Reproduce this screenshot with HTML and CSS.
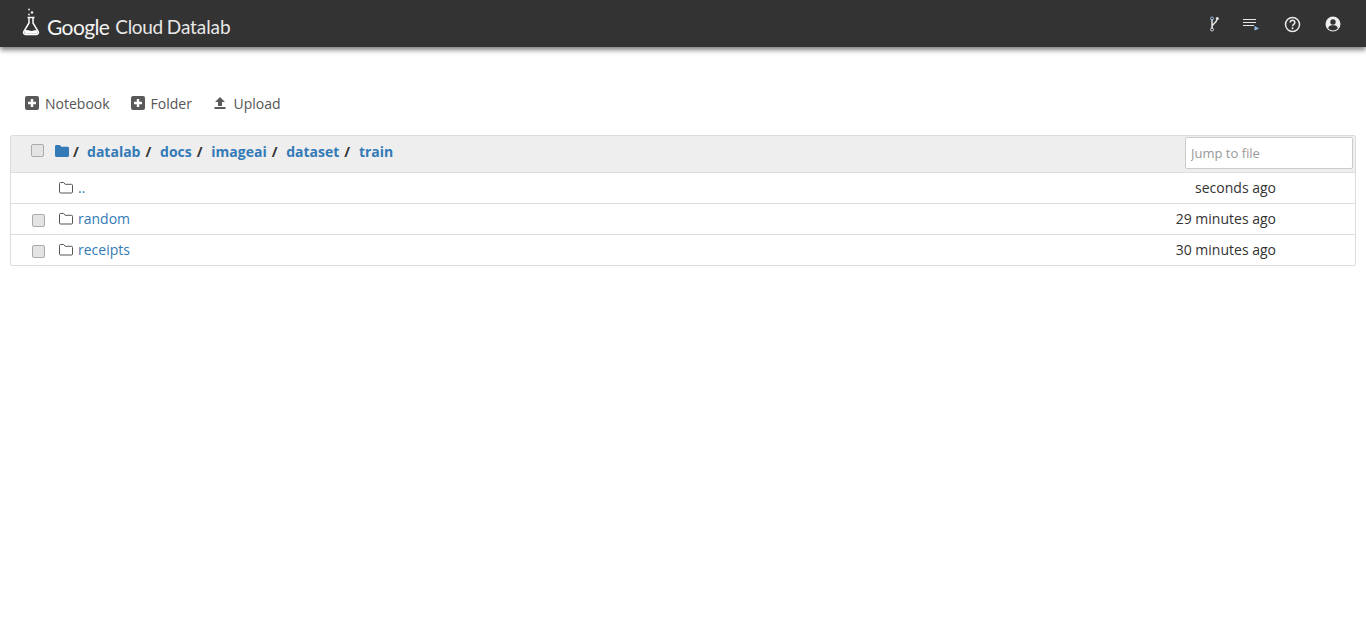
FILE: index.html
```html
<!DOCTYPE html>
<html lang="en">
<head>
<meta charset="utf-8">
<title>Google Cloud Datalab</title>
<link rel="stylesheet" href="styles.css">
</head>
<body>
<header class="topbar">
  <div class="brand">
    <svg class="flask" width="18" height="28" viewBox="0 0 18 28" fill="none">
      <circle cx="7" cy="1.500" r="1" fill="#ddd"/>
      <circle cx="10" cy="4.500" r="1.300" fill="#eee"/>
      <circle cx="7" cy="6.500" r="1" fill="#ddd"/>
      <path d="M5.500 9.500h7M7 9.500v5.500L1.800 23.500c-.7 1.300 0 3 1.700 3h11c1.700 0 2.400-1.700 1.700-3L11 15V9.500" stroke="#fff" stroke-width="1.500"/>
      <path d="M3 22.500c2.500-1.200 4.500 .4 6.500 .4s3.500-.9 5.500-.4l1 3.200H2.200z" fill="#fff"/>
    </svg>
    <span class="brand-google">Google</span>
    <span class="brand-rest">Cloud</span>
    <span class="brand-rest brand-last">Datalab</span>
  </div>
  <nav class="top-icons">
    <svg class="git-icon" width="14" height="16" viewBox="0 0 14 16" fill="none">
      <path d="M5 3v10M5 11c0-3.500 4.500-3.500 5-8" stroke="#e6e6e6" stroke-width="1.500"/>
      <circle cx="5" cy="2.500" r="1.500" stroke="#9cc3e6" stroke-width="1"/>
      <circle cx="5" cy="13.500" r="1.500" stroke="#cfd8df" stroke-width="1"/>
      <circle cx="10.300" cy="2.500" r="1.500" fill="#e6e6e6"/>
    </svg>
    <svg class="list-icon" width="18" height="14" viewBox="0 0 18 14" fill="none">
      <path d="M1 2.500h13M1 5.500h13M1 8.500h11" stroke="#e6e6e6" stroke-width="1"/>
      <path d="M12.500 9v4.500l4.500-2z" fill="#8fc0ea"/>
    </svg>
    <svg width="17" height="17" viewBox="0 0 17 17" fill="none">
      <circle cx="8.500" cy="8.500" r="7" stroke="#eaeaea" stroke-width="1.500"/>
      <path d="M6.200 6.600c.1-3 4.700-3 4.700-.1 0 1.800-2.400 1.800-2.400 3.700" stroke="#eaeaea" stroke-width="1.500"/>
      <circle cx="8.500" cy="12.200" r="1" fill="#eaeaea"/>
    </svg>
    <svg width="16" height="16" viewBox="0 0 16 16">
      <circle cx="8" cy="8" r="7.500" fill="#eee"/>
      <circle cx="8" cy="6" r="2.700" fill="#333"/>
      <path d="M3.200 12.500c.5-2.800 2.700-3.300 4.800-3.300s4.300.5 4.800 3.300a6.500 6.500 0 0 1-9.600 0z" fill="#333"/>
    </svg>
  </nav>
</header>

<main class="content">
  <div class="toolbar">
    <button class="tool">
      <svg class="tool-icon" width="14" height="14" viewBox="0 0 14 14"><rect width="14" height="14" rx="2" fill="#595959"/><path d="M7 3v8M3 7h8" stroke="#fff" stroke-width="2.400"/></svg>
      Notebook
    </button>
    <button class="tool">
      <svg class="tool-icon" width="14" height="14" viewBox="0 0 14 14"><rect width="14" height="14" rx="2" fill="#595959"/><path d="M7 3v8M3 7h8" stroke="#fff" stroke-width="2.400"/></svg>
      Folder
    </button>
    <button class="tool">
      <svg class="tool-icon upload" width="14" height="14" viewBox="0 0 14 14"><path d="M7 1l5 5H9v4H5V6H2zM1.500 11h11v2h-11z" fill="#595959"/></svg>
      Upload
    </button>
  </div>

  <section class="list">
    <div class="list-head">
      <input class="check head-check" type="checkbox">
      <svg class="head-folder" width="14" height="12" viewBox="0 0 14 12"><path d="M1.500 0h3.300l1.500 1.800h6.200c.8 0 1.500.7 1.500 1.500v7.200c0 .8-.7 1.500-1.500 1.500h-11C.7 12 0 11.300 0 10.500v-9C0 .7.700 0 1.500 0z" fill="#337ab7"/></svg>
      <div class="crumbs">
        <span class="sep sep-root">/</span>
        <a class="crumb">datalab</a><span class="sep">/</span>
        <a class="crumb">docs</a><span class="sep">/</span>
        <a class="crumb">imageai</a><span class="sep">/</span>
        <a class="crumb">dataset</a><span class="sep">/</span>
        <a class="crumb">train</a>
      </div>
      <input class="jump" type="text" placeholder="Jump to file">
    </div>
    <div class="row">
      <span class="check-slot"></span>
      <svg class="row-folder" width="14" height="12" viewBox="0 0 14 12" fill="none"><path d="M1.500.5h3.200l1.500 1.800h6.300c.6 0 1 .4 1 1v6.700c0 .6-.4 1-1 1h-11c-.6 0-1-.4-1-1v-8.500c0-.6.400-1 1-1z" stroke="#555"/></svg>
      <a class="name">..</a>
      <span class="time">seconds ago</span>
    </div>
    <div class="row">
      <span class="check-slot"><input class="check" type="checkbox"></span>
      <svg class="row-folder" width="14" height="12" viewBox="0 0 14 12" fill="none"><path d="M1.500.5h3.200l1.500 1.800h6.300c.6 0 1 .4 1 1v6.700c0 .6-.4 1-1 1h-11c-.6 0-1-.4-1-1v-8.500c0-.6.400-1 1-1z" stroke="#555"/></svg>
      <a class="name">random</a>
      <span class="time">29 minutes ago</span>
    </div>
    <div class="row">
      <span class="check-slot"><input class="check" type="checkbox"></span>
      <svg class="row-folder" width="14" height="12" viewBox="0 0 14 12" fill="none"><path d="M1.500.5h3.200l1.500 1.800h6.300c.6 0 1 .4 1 1v6.700c0 .6-.4 1-1 1h-11c-.6 0-1-.4-1-1v-8.500c0-.6.400-1 1-1z" stroke="#555"/></svg>
      <a class="name">receipts</a>
      <span class="time">30 minutes ago</span>
    </div>
  </section>
</main>
</body>
</html>
```

FILE: styles.css
```css
* { box-sizing: border-box; }

html, body {
  margin: 0;
  height: 100%;
  background: #fff;
  overflow: hidden;
}

body {
  font-family: "Open Sans", "Noto Sans", sans-serif;
  font-size: 14px;
  line-height: 20px;
  color: #333;
}

.topbar {
  height: 47px;
  background: #333;
  box-shadow: 0 3px 5px rgba(0, 0, 0, .5);
  display: flex;
  align-items: center;
  justify-content: space-between;
  padding: 0 25px 0 22px;
}

.brand {
  display: flex;
  align-items: center;
  color: #eee;
  height: 47px;
}

.flask { margin: -3px 7px 0 0; }

.brand-google {
  font-family: Lato, sans-serif;
  font-size: 21px;
  font-weight: 400;
  letter-spacing: -.6px;
  color: #f4f4f4;
  margin: 6px 6px 0 0;
}

.brand-rest {
  font-family: Lato, sans-serif;
  font-size: 19px;
  font-weight: 400;
  color: #e8e8e8;
  letter-spacing: -.35px;
  margin: 6px 4px 0 0;
}

.brand-last { margin-right: 0; letter-spacing: -.1px; }

.top-icons {
  display: flex;
  align-items: center;
  gap: 24px;
  margin-top: 1px;
}

.list-icon { margin-left: -3px; }

.content { padding: 47px 10px 0; }

.toolbar {
  display: flex;
  height: 20px;
  margin-bottom: 21px;
  padding-left: 15px;
  gap: 21px;
}

.tool {
  font: inherit;
  color: #555;
  background: none;
  border: 0;
  padding: 0;
  display: flex;
  align-items: center;
  gap: 6px;
}

.tool-icon { margin-top: -2px; }

.tool-icon.upload { margin-right: .5px; }

.list {
  border: 1px solid #ddd;
  border-radius: 2px;
}

.list-head {
  height: 37px;
  background: #eee;
  border-bottom: 1px solid #ddd;
  display: flex;
  align-items: center;
  padding: 0 2px 0 20px;
}

.check {
  appearance: none;
  width: 13px;
  height: 13px;
  margin: 2px 0 0;
  border: 1px solid #aaa;
  border-radius: 2px;
  background: #e4e4e4;
  display: block;
}

.head-check { margin: -8px 11px 0 0; }

.head-folder { margin-top: -6px; }

.crumbs {
  flex: 1;
  display: flex;
  font-weight: 700;
  margin-top: -5px;
}

.crumb { color: #337ab7; }

.sep { margin: 0 8.750px 0 5px; }

.sep-root { margin: 0 8.250px 0 4px; }

.jump {
  width: 168px;
  height: 32px;
  border: 1px solid #ccc;
  border-radius: 2px;
  background: #fff;
  padding: 0 5px;
  font: 13px "Open Sans", sans-serif;
  color: #333;
  margin-top: -3px;
}

.jump::placeholder { color: #999; opacity: 1; }

.row {
  height: 31px;
  display: flex;
  align-items: center;
  border-bottom: 1px solid #ddd;
  padding: 0 79px 0 21px;
}

.row:last-child { height: 30px; border-bottom: 0; }

.check-slot { width: 27px; }

.row-folder { margin: -1px 5px 0 0; }

.name { flex: 1; color: #337ab7; }

.time { color: #333; }
```
